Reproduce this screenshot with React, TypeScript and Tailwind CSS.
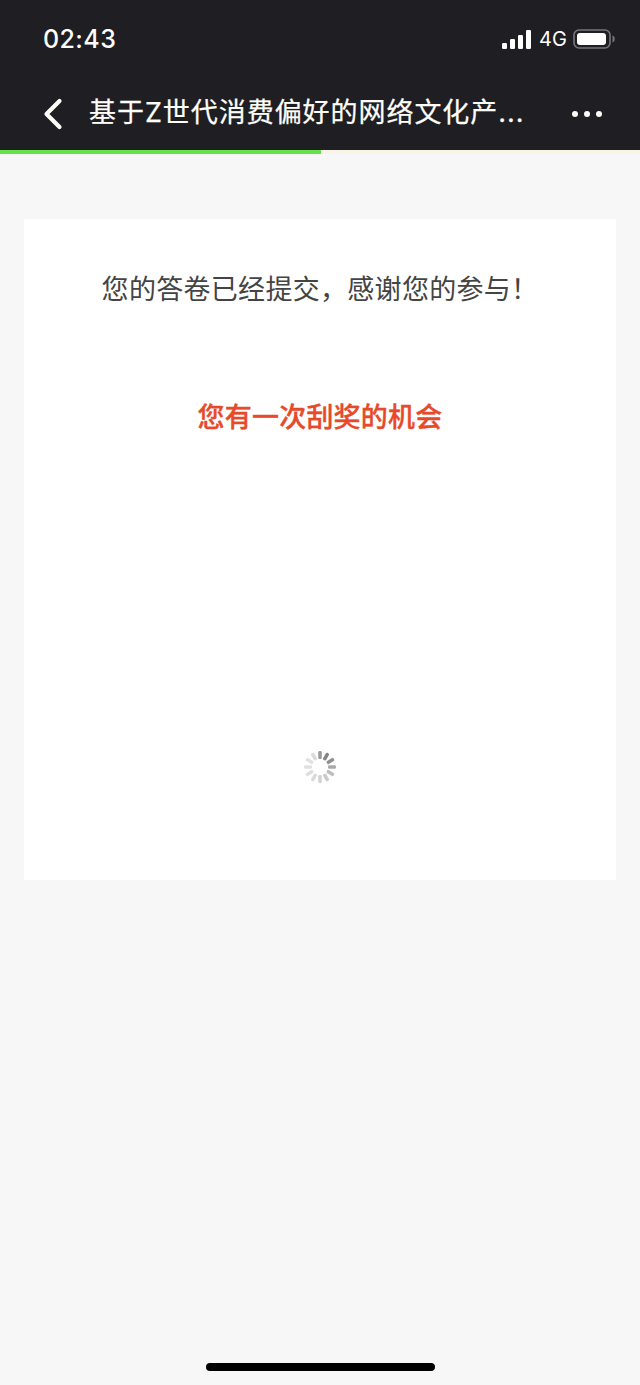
const cjk = "font-['Inter','Noto_Sans_CJK_SC',sans-serif]";

function Spinner() {
  const opacities = [0.5, 0.6, 0.55, 0.42, 0.32, 0.26, 0.22, 0.18, 0.16, 0.15, 0.15, 0.18];
  return (
    <svg width="36" height="36" viewBox="0 0 36 36" aria-hidden="true" className="blur-[0.6px]">
      {opacities.map((o, i) => (
        <rect
          key={i}
          x="16.25"
          y="2"
          width="3.5"
          height="8"
          rx="1.2"
          fill="#333"
          opacity={o}
          transform={`rotate(${i * 30} 18 18)`}
        />
      ))}
    </svg>
  );
}

export default function App() {
  return (
    <div className={`relative flex h-[1385px] w-[640px] flex-col overflow-hidden bg-[#f7f7f7] ${cjk}`}>
      <header className="h-[150px] bg-[#1e1e23] text-[#fdfdf8]">
        <div className="flex h-[78px] items-center justify-between pl-[43px] pr-[25px]">
          <span className="pt-[1px] text-[25px] font-medium tracking-[0.4px] text-white">02:43</span>
          <div className="flex items-center">
            <svg width="30" height="19" viewBox="0 0 30 19" fill="#fff" aria-hidden="true">
              <rect x="0" y="13" width="5" height="6" rx="1.2" />
              <rect x="8" y="9" width="5" height="10" rx="1.2" />
              <rect x="16" y="5" width="5" height="14" rx="1.2" />
              <rect x="24" y="0" width="5" height="19" rx="1.2" />
            </svg>
            <span className="ml-[7px] w-[27px] text-[20px] leading-none text-white">4G</span>
            <svg className="ml-[7px]" width="42" height="20" viewBox="0 0 42 20" aria-hidden="true">
              <rect x="1" y="1" width="36" height="18" rx="5" fill="none" stroke="#77777a" strokeWidth="1.6" />
              <rect x="4" y="4" width="29" height="12" rx="3" fill="#fff" />
              <path d="M39.5 6.5c1.6.5 2.2 1.8 2.2 3.5s-.6 3-2.2 3.5z" fill="#77777a" />
            </svg>
          </div>
        </div>
        <div className="flex h-[72px] items-center pb-[1px] pl-[43px] pr-[38px]">
          <svg width="20" height="32" viewBox="0 0 20 32" fill="none" aria-hidden="true">
            <path d="M16.5 3 3.5 16l13 13" stroke="#fdfdf8" strokeWidth="4.2" strokeLinecap="round" strokeLinejoin="round" />
          </svg>
          <h1 className="ml-[26px] min-w-0 flex-1 whitespace-nowrap text-[27px] font-normal tracking-[0.95px] [-webkit-text-stroke:0.25px_#fdfdf8]">
            基于Z世代消费偏好的网络文化产...
          </h1>
          <div className="flex gap-[6px]">
            <span className="size-[6px] rounded-full bg-[#fdfdf8]" />
            <span className="size-[6px] rounded-full bg-[#fdfdf8]" />
            <span className="size-[6px] rounded-full bg-[#fdfdf8]" />
          </div>
        </div>
      </header>

      <div className="h-[4px] bg-[#f8f4e8]">
        <div className="h-full w-[321px] bg-[#66e24e]" />
      </div>

      <main className="px-[24px] pt-[65px]">
        <section className="flex h-[661px] flex-col items-center bg-white">
          <p className="mt-[52px] text-[27px] leading-[38px] tracking-[0.3px] text-[#444]">您的答卷已经提交，感谢您的参与！</p>
          <p className="mt-[90px] text-[27px] font-medium leading-[38px] tracking-[0.2px] text-[#e64a2b] [-webkit-text-stroke:0.35px_#e64a2b]">您有一次刮奖的机会</p>
          <div className="mt-[312px]">
            <Spinner />
          </div>
        </section>
      </main>

      <div className="absolute bottom-[14px] left-[206px] h-[8px] w-[229px] rounded-full bg-black" />
    </div>
  );
}
